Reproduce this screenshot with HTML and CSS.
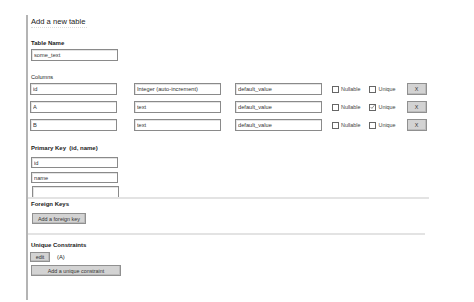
FILE: index.html
```html
<!DOCTYPE html>
<html lang="en">
<head>
  <meta charset="UTF-8" />
  <title>Add a new table</title>
  <link rel="stylesheet" href="styles.css">
</head>
<body>

  <div class="panel">
    <h1 class="title">Add a new table</h1>

    <div class="label bold name-label">Table Name</div>
    <input class="field name-field" value="some_text">

    <div class="label cols-label">Columns</div>
    <div class="columns">
      <div class="col-row">
        <input class="field col-name" value="id">
        <input class="field col-type" value="Integer (auto-increment)">
        <input class="field col-default" value="default_value">
        <label class="check"><span class="box"></span>Nullable</label>
        <label class="check unique"><span class="box"></span>Unique</label>
        <button class="btn remove-btn">X</button>
      </div>
      <div class="col-row">
        <input class="field col-name" value="A">
        <input class="field col-type" value="text">
        <input class="field col-default" value="default_value">
        <label class="check"><span class="box"></span>Nullable</label>
        <label class="check unique"><span class="box checked"><svg viewBox="0 0 8 8" width="6" height="6"><path d="M1 4 L3 6.3 L7.2 1" fill="none" stroke="#444" stroke-width="0.9"/></svg></span>Unique</label>
        <button class="btn remove-btn">X</button>
      </div>
      <div class="col-row">
        <input class="field col-name" value="B">
        <input class="field col-type" value="text">
        <input class="field col-default" value="default_value">
        <label class="check"><span class="box"></span>Nullable</label>
        <label class="check unique"><span class="box"></span>Unique</label>
        <button class="btn remove-btn">X</button>
      </div>
    </div>

    <div class="label bold pk-label">Primary Key&nbsp; (id, name)</div>
    <div class="pk-list">
      <input class="field pk-field" value="id">
      <input class="field pk-field" value="name">
      <input class="field pk-field" value="">
    </div>

    <div class="divider first"></div>

    <div class="label bold fk-label">Foreign Keys</div>
    <button class="btn fk-btn">Add a foreign key</button>

    <div class="divider second"></div>

    <div class="label bold uc-label">Unique Constraints</div>
    <div class="uc-row">
      <button class="btn edit-btn">edit</button>
      <span class="uc-name">(A)</span>
    </div>
    <button class="btn uc-btn">Add a unique constraint</button>
  </div>

</body>
</html>
```

FILE: styles.css
```css
body {
  font-family: "Liberation Sans", Arial, sans-serif;
  background: #ffffff;
  color: #222;
  margin: 0;
}

.panel {
  margin: 15px 0 0 26px;
  border-left: 2px solid #b4b4b4;
  padding: 2px 0 0 3px;
  height: 283px;
  width: 400px;
  display: flex;
  flex-direction: column;
  align-items: flex-start;
}

.title {
  font-size: 7.6px;
  font-weight: normal;
  line-height: 10px;
  margin: 0;
  padding-right: 2px;
  border-bottom: 1px dotted #dcdcdc;
}

.label {
  font-size: 5.6px;
  line-height: 8px;
  height: 8px;
}

.bold {
  font-size: 6px;
  font-weight: bold;
}

.name-label { margin-top: 11px; }
.cols-label { margin-top: 12px; }
.pk-label { margin-top: 13px; }
.fk-label { margin-top: 1px; }
.uc-label { margin-top: 6px; }

.field {
  box-sizing: border-box;
  height: 12px;
  border: 1px solid #8a8a8a;
  box-shadow: inset 1px 1px 0 #e4e4e4;
  border-radius: 0;
  background: white;
  font-family: "Liberation Sans", Arial, sans-serif;
  font-size: 5.7px;
  color: #333;
  padding: 0 2px;
  margin: 0;
  outline: none;
}

.name-field {
  width: 87px;
  margin-top: 2px;
}

.columns {
  margin-top: 2px;
  display: flex;
  flex-direction: column;
  gap: 6px;
}

.col-row {
  display: flex;
  align-items: center;
}

.col-name { width: 87px; margin-left: -1px; }
.col-type { width: 87px; margin-left: 17px; }
.col-default { width: 87px; margin-left: 14px; }

.check {
  display: flex;
  align-items: center;
  gap: 2px;
  font-size: 5.4px;
  color: #444;
  margin-left: 10px;
}

.check.unique { margin-left: 9px; }

.box {
  box-sizing: border-box;
  width: 7px;
  height: 7px;
  border: 1px solid #666;
  background: white;
  display: flex;
  align-items: center;
  justify-content: center;
}

.btn {
  box-sizing: border-box;
  background: #d3d3d3;
  border: 1px solid #909090;
  box-shadow: inset -1px -1px 0 #bcbcbc;
  border-radius: 0;
  font-family: "Liberation Sans", Arial, sans-serif;
  font-size: 5.4px;
  color: #333;
  padding: 0;
  margin: 0;
  cursor: pointer;
}

.remove-btn {
  width: 20px;
  height: 12px;
  margin-left: 11px;
}

.pk-list {
  margin-top: 5px;
  display: flex;
  flex-direction: column;
  gap: 4px;
}

.pk-field {
  width: 87px;
  height: 11px;
}

.pk-list .pk-field:last-child {
  margin-left: 1px;
  height: 12px;
  margin-top: -1px;
}

.divider {
  height: 2px;
  background: #e3e3e3;
  margin-left: -3px;
}

.divider.first {
  margin-top: -1px;
  width: 401px;
}

.divider.second {
  margin-top: 9px;
  width: 397px;
}

.fk-btn {
  width: 54px;
  height: 11px;
  margin-top: 5px;
  margin-left: 1px;
}

.uc-row {
  margin-top: 3px;
  display: flex;
  align-items: center;
}

.edit-btn {
  width: 20px;
  height: 10px;
  margin-left: -1px;
}

.uc-name {
  font-size: 5.8px;
  margin-left: 7px;
}

.uc-btn {
  width: 90px;
  height: 11px;
  margin-top: 3px;
}
```
